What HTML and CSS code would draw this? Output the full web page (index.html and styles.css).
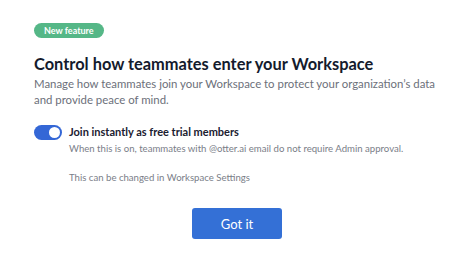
FILE: index.html
```html
<!DOCTYPE html>
<html lang="en">
<head>
  <meta charset="UTF-8">
  <title>Workspace join settings</title>
  <link rel="stylesheet" href="styles.css">
</head>
<body>
  <div class="modal">
    <span class="badge">New feature</span>
    <h2 class="title">Control how teammates enter your Workspace</h2>
    <p class="lead">Manage how teammates join your Workspace to protect your organization’s data and provide peace of mind.</p>

    <div class="option">
      <span class="toggle"><span class="knob"></span></span>
      <div class="option-text">
        <div class="option-label">Join instantly as free trial members</div>
        <div class="option-desc">When this is on, teammates with @otter.ai email do not require Admin approval.</div>
      </div>
    </div>

    <p class="note">This can be changed in Workspace Settings</p>

    <div class="actions">
      <button type="button" class="btn">Got it</button>
    </div>
  </div>
</body>
</html>
```

FILE: styles.css
```css
body { margin: 0; background: #fff; font-family: Lato, "Open Sans", sans-serif; }
.modal { padding: 23px 34px 0 34px; display: flex; flex-direction: column; align-items: flex-start; }
.badge { background: #55b787; color: #fff; font-size: 9px; font-weight: 700; height: 15px; line-height: 15px; padding: 0 10px; border-radius: 8px; }
.title { margin: 16px 0 0 0; font-size: 16.4px; font-weight: 700; color: #141b2d; line-height: 20px; }
.lead { margin: 2px 0 0 0; font-size: 11.4px; line-height: 16px; color: #6c707a; width: 410px; }
.option { display: flex; gap: 7px; margin-top: 16px; }
.toggle { width: 28px; height: 15px; border-radius: 8px; background: #3467d6; display: flex; align-items: center; justify-content: flex-end; padding: 0 2px; box-sizing: border-box; margin-top: 1px; }
.knob { width: 11px; height: 11px; border-radius: 50%; background: #fff; }
.option-label { font-size: 11px; font-weight: 700; color: #1a2030; line-height: 16px; }
.option-desc { font-size: 9.6px; color: #7a7e88; line-height: 14px; margin-top: 2px; }
.note { margin: 15px 0 0 35px; font-size: 9.6px; color: #7a7e88; line-height: 14px; }
.actions { align-self: stretch; display: flex; justify-content: center; margin-top: 23px; }
.btn { width: 90px; height: 31px; background: #3470d6; color: #fff; border: none; border-radius: 3px; font-family: inherit; font-size: 13px; cursor: pointer; }
```
